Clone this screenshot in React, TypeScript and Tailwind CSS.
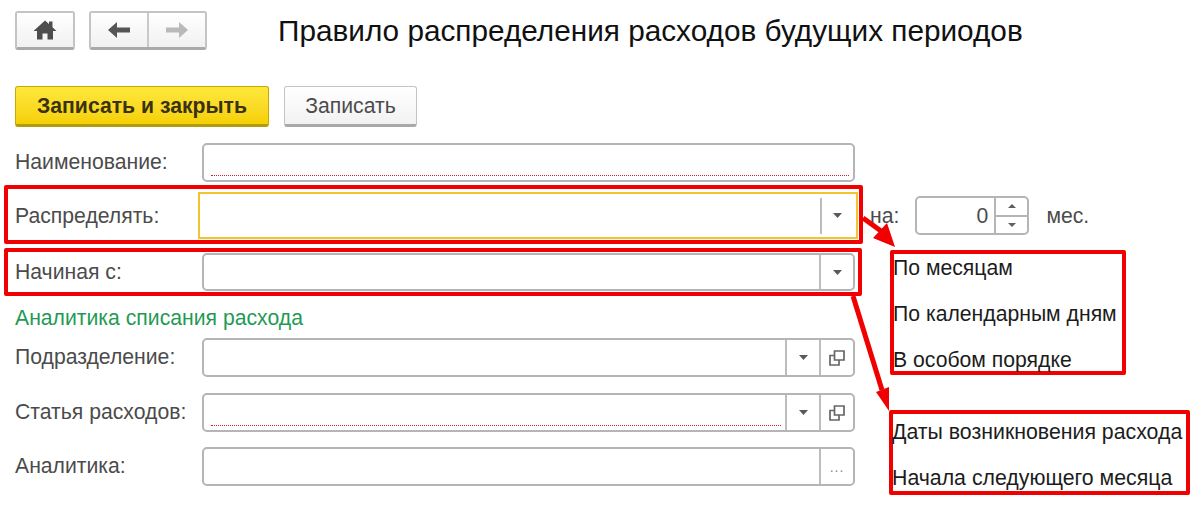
import React from 'react';

const font = "font-['Liberation_Sans',Arial,sans-serif]";

const Caret = () => (
  <svg width="9" height="5" viewBox="0 0 9 5">
    <path d="M0 0h9L4.5 5z" fill="#5a5a5a" />
  </svg>
);

const CopyIcon = () => (
  <svg width="16" height="16" viewBox="0 0 16 16" fill="none" stroke="#666666" strokeWidth="1.7">
    <path d="M5.5 1h9.5v9H5.5z" />
    <path d="M5.5 5.5H1V15h9v-5" />
  </svg>
);

const FieldButton = ({ children }: { children: React.ReactNode }) => (
  <div className="w-[34px] h-full flex items-center justify-center border-l-2 border-[#bdbdbd]">
    {children}
  </div>
);

const Field = ({
  label,
  required,
  dotsEnd,
  children,
  className,
}: {
  label: string;
  required?: boolean;
  dotsEnd?: string;
  children?: React.ReactNode;
  className: string;
}) => (
  <div className={`flex items-center ${className}`}>
    <div className="w-[187px] pb-[1px] text-[21.2px] text-[#4b4b4b] shrink-0">{label}</div>
    <div className="relative w-[653px] h-full flex justify-end bg-white border-2 border-[#b5b5b5] rounded-[5px]">
      {required && (
        <div className={`absolute left-[7px] bottom-[4px] border-b border-dotted border-[#e02020] ${dotsEnd}`} />
      )}
      {children}
    </div>
  </div>
);

const NavButton = ({ children, className }: { children: React.ReactNode; className: string }) => (
  <div className={`h-full flex items-center justify-center bg-gradient-to-b from-white to-[#f1f1f1] ${className}`}>
    {children}
  </div>
);

const App: React.FC = () => {
  return (
    <div className={`relative w-[1200px] h-[509px] overflow-hidden bg-white ${font}`}>
      <div className="flex flex-col pl-[15px] pt-[11px]">
        {/* Top bar */}
        <div className="flex items-center h-[39px]">
          <div className="w-[60px] h-full border-2 border-[#c4c4c4] border-b-[3px] border-b-[#a9a9a9] rounded-[3px] overflow-hidden">
            <NavButton className="w-full">
              <svg width="24" height="20" viewBox="0 0 24 20">
                <path d="M12 0.5L0.5 11h3.5v8.5h5.5v-6h5v6H20V11h3.5L19.5 7.3V1.5h-3.5v2.6z" fill="#4d4d4d" />
              </svg>
            </NavButton>
          </div>
          <div className="ml-[14px] w-[118px] h-full flex border-2 border-[#c4c4c4] border-b-[3px] border-b-[#a9a9a9] rounded-[3px] overflow-hidden">
            <NavButton className="w-[58px] border-r-2 border-[#c9c9c9]">
              <svg width="24" height="18" viewBox="0 0 24 18">
                <path d="M10 1L1 9l9 8v-5.5h13v-5H10z" fill="#555555" />
              </svg>
            </NavButton>
            <NavButton className="flex-1">
              <svg width="24" height="18" viewBox="0 0 24 18">
                <path d="M14 1l9 8-9 8v-5.5H1v-5h13z" fill="#b9b9b9" />
              </svg>
            </NavButton>
          </div>
          <h1 className="ml-[71px] text-[29.75px] leading-none font-normal text-[#111111] whitespace-nowrap">
            Правило распределения расходов будущих периодов
          </h1>
        </div>

        {/* Command bar */}
        <div className="flex items-center mt-[36px] h-[41px]">
          <div className="w-[254px] h-full flex items-center justify-center bg-gradient-to-b from-[#ffe83a] to-[#f5d000] border border-[#c9a800] border-b-[3px] border-b-[#b39b10] rounded-[3px] text-[21.2px] font-bold text-[#3a3210]">
            Записать и закрыть
          </div>
          <div className="ml-[15px] w-[133px] h-full flex items-center justify-center bg-gradient-to-b from-white to-[#f2f2f2] border border-[#c4c4c4] border-b-[3px] border-b-[#a9a9a9] rounded-[3px] text-[21.2px] text-[#4b4b4b]">
            Записать
          </div>
        </div>

        <Field label="Наименование:" required dotsEnd="w-[638px]" className="mt-[16px] h-[39px]" />

        {/* Focused row */}
        <div className="flex items-center mt-[10px] h-[47px]">
          <div className="w-[183px] text-[21.2px] text-[#4b4b4b] shrink-0">Распределять:</div>
          <div className="w-[660px] h-full flex justify-end items-center border-2 border-[#f4c430]">
            <div className="w-[32px] h-[36px] flex items-center justify-center border-l-2 border-[#bdbdbd] mr-[4px]">
              <Caret />
            </div>
          </div>
          <div className="ml-[12px] text-[21.2px] text-[#4b4b4b]">на:</div>
          <div className="ml-[16px] w-[114px] h-[39px] flex justify-end bg-white border-2 border-[#b5b5b5] rounded-[5px]">
            <div className="flex-1 flex items-center justify-end pr-[6px] text-[21.2px] text-[#4b4b4b]">0</div>
            <div className="w-[33px] flex flex-col border-l-2 border-[#b5b5b5]">
              <div className="flex-1 flex items-center justify-center border-b-2 border-[#b5b5b5]">
                <svg width="8" height="4" viewBox="0 0 8 4"><path d="M0 4h8L4 0z" fill="#5f5f5f" /></svg>
              </div>
              <div className="flex-1 flex items-center justify-center">
                <svg width="8" height="4" viewBox="0 0 8 4"><path d="M0 0h8L4 4z" fill="#5f5f5f" /></svg>
              </div>
            </div>
          </div>
          <div className="ml-[17px] text-[21.2px] text-[#4b4b4b]">мес.</div>
        </div>

        <Field label="Начиная с:" className="mt-[14px] h-[38px]">
          <FieldButton><Caret /></FieldButton>
        </Field>

        <div className="mt-[15px] h-[24px] flex items-center text-[21.2px] text-[#1f9a55]">Аналитика списания расхода</div>

        <Field label="Подразделение:" className="mt-[8px] h-[39px]">
          <FieldButton><Caret /></FieldButton>
          <FieldButton><CopyIcon /></FieldButton>
        </Field>
        <Field label="Статья расходов:" required dotsEnd="w-[570px]" className="mt-[16px] h-[39px]">
          <FieldButton><Caret /></FieldButton>
          <FieldButton><CopyIcon /></FieldButton>
        </Field>
        <Field label="Аналитика:" className="mt-[15px] h-[39px]">
          <FieldButton>
            <span className="text-[14px] leading-none text-[#8a8a8a] tracking-[1px]">...</span>
          </FieldButton>
        </Field>
      </div>

      {/* Red annotations over the form */}
      <div className="absolute left-[4px] top-[185px] w-[859px] h-[59px] border-[4px] border-[#f00000] rounded-[2px]" />
      <div className="absolute left-[4px] top-[248px] w-[858px] h-[48px] border-[4px] border-[#f00000] rounded-[2px]" />

      <div className="absolute left-[890px] top-[250px] w-[236px] h-[125px] border-[4px] border-[#f00000] rounded-[2px] text-[21.2px] text-[#1c1c1c] whitespace-nowrap">
        <div className="absolute left-[-1px] top-[-2px]">По месяцам</div>
        <div className="absolute left-[-1px] top-[44px]">По календарным дням</div>
        <div className="absolute left-[-1px] top-[90px]">В особом порядке</div>
      </div>
      <div className="absolute left-[889px] top-[410px] w-[301px] h-[85px] border-[4px] border-[#f00000] rounded-[2px] text-[21.3px] text-[#1c1c1c] whitespace-nowrap">
        <div className="absolute left-[-1px] top-[3px]">Даты возникновения расхода</div>
        <div className="absolute left-[-1px] top-[49px]">Начала следующего месяца</div>
      </div>

      <svg className="absolute left-0 top-0" width="1200" height="509" viewBox="0 0 1200 509" fill="none">
        <path d="M863 218L881 231" stroke="#f00000" strokeWidth="5" />
        <path d="M895 247L873 238L887 223z" fill="#f00000" />
        <path d="M853 296L882 390" stroke="#f00000" strokeWidth="5" />
        <path d="M889 411L876 392L889 387z" fill="#f00000" />
      </svg>
    </div>
  );
};

export default App;
